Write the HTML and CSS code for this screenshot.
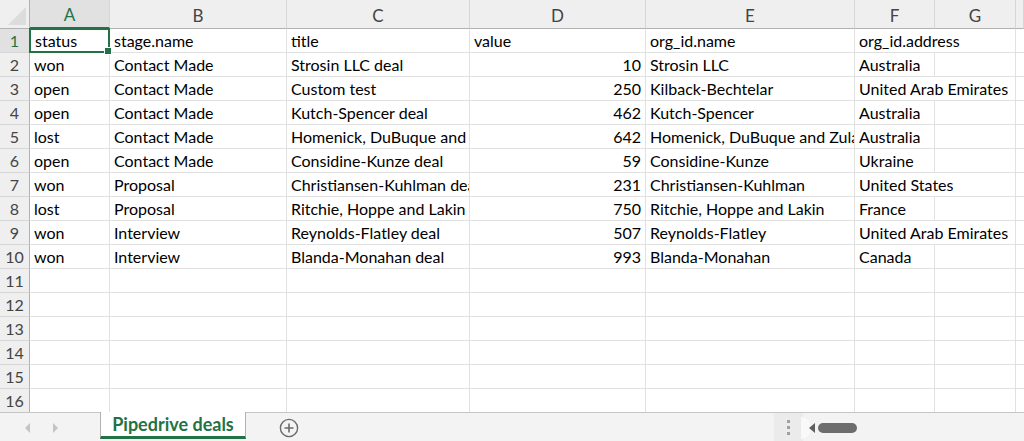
FILE: index.html
```html
<!DOCTYPE html>
<html lang="en">
<head>
  <meta charset="UTF-8">
  <meta name="viewport" content="width=device-width, initial-scale=1.0">
  <title>Pipedrive deals</title>
  <link rel="stylesheet" href="styles.css">
</head>
<body>
  <div class="sheet">
    <div class="row head">
      <div class="corner"><span class="tri"></span></div>
      <div class="col sel">A</div>
      <div class="col">B</div>
      <div class="col">C</div>
      <div class="col">D</div>
      <div class="col">E</div>
      <div class="col">F</div>
      <div class="col">G</div>
      <div class="col"></div>
    </div>

    <div class="row">
      <div class="num sel">1</div>
      <div class="cell active">status<span class="handle"></span></div>
      <div class="cell">stage.name</div>
      <div class="cell">title</div>
      <div class="cell">value</div>
      <div class="cell">org_id.name</div>
      <div class="cell spill">org_id.address</div>
      <div class="cell"></div>
    </div>
    <div class="row">
      <div class="num">2</div>
      <div class="cell">won</div>
      <div class="cell">Contact Made</div>
      <div class="cell">Strosin LLC deal</div>
      <div class="cell n">10</div>
      <div class="cell">Strosin LLC</div>
      <div class="cell">Australia</div>
      <div class="cell"></div>
      <div class="cell"></div>
    </div>
    <div class="row">
      <div class="num">3</div>
      <div class="cell">open</div>
      <div class="cell">Contact Made</div>
      <div class="cell">Custom test</div>
      <div class="cell n">250</div>
      <div class="cell">Kilback-Bechtelar</div>
      <div class="cell spill">United Arab Emirates</div>
      <div class="cell"></div>
    </div>
    <div class="row">
      <div class="num">4</div>
      <div class="cell">open</div>
      <div class="cell">Contact Made</div>
      <div class="cell">Kutch-Spencer deal</div>
      <div class="cell n">462</div>
      <div class="cell">Kutch-Spencer</div>
      <div class="cell">Australia</div>
      <div class="cell"></div>
      <div class="cell"></div>
    </div>
    <div class="row">
      <div class="num">5</div>
      <div class="cell">lost</div>
      <div class="cell">Contact Made</div>
      <div class="cell">Homenick, DuBuque and Zulauf deal</div>
      <div class="cell n">642</div>
      <div class="cell">Homenick, DuBuque and Zulauf</div>
      <div class="cell">Australia</div>
      <div class="cell"></div>
      <div class="cell"></div>
    </div>
    <div class="row">
      <div class="num">6</div>
      <div class="cell">open</div>
      <div class="cell">Contact Made</div>
      <div class="cell">Considine-Kunze deal</div>
      <div class="cell n">59</div>
      <div class="cell">Considine-Kunze</div>
      <div class="cell">Ukraine</div>
      <div class="cell"></div>
      <div class="cell"></div>
    </div>
    <div class="row">
      <div class="num">7</div>
      <div class="cell">won</div>
      <div class="cell">Proposal</div>
      <div class="cell">Christiansen-Kuhlman deal</div>
      <div class="cell n">231</div>
      <div class="cell">Christiansen-Kuhlman</div>
      <div class="cell spill">United States</div>
      <div class="cell"></div>
    </div>
    <div class="row">
      <div class="num">8</div>
      <div class="cell">lost</div>
      <div class="cell">Proposal</div>
      <div class="cell">Ritchie, Hoppe and Lakin deal</div>
      <div class="cell n">750</div>
      <div class="cell">Ritchie, Hoppe and Lakin</div>
      <div class="cell">France</div>
      <div class="cell"></div>
      <div class="cell"></div>
    </div>
    <div class="row">
      <div class="num">9</div>
      <div class="cell">won</div>
      <div class="cell">Interview</div>
      <div class="cell">Reynolds-Flatley deal</div>
      <div class="cell n">507</div>
      <div class="cell">Reynolds-Flatley</div>
      <div class="cell spill">United Arab Emirates</div>
      <div class="cell"></div>
    </div>
    <div class="row">
      <div class="num">10</div>
      <div class="cell">won</div>
      <div class="cell">Interview</div>
      <div class="cell">Blanda-Monahan deal</div>
      <div class="cell n">993</div>
      <div class="cell">Blanda-Monahan</div>
      <div class="cell">Canada</div>
      <div class="cell"></div>
      <div class="cell"></div>
    </div>

    <div id="emptyRows"></div>
  </div>

  <div class="tabbar">
    <div class="nav">
      <span class="arrow left"></span>
      <span class="arrow right"></span>
    </div>
    <div class="tab">Pipedrive deals</div>
    <div class="add">
      <svg width="20" height="20" viewBox="0 0 20 20">
        <circle cx="10" cy="10" r="8.6" fill="none" stroke="#6b6b6b" stroke-width="1.4"/>
        <path d="M10 5.5v9M5.5 10h9" stroke="#6b6b6b" stroke-width="1.6"/>
      </svg>
    </div>
    <div class="spacer"></div>
    <div class="grip"><span></span><span></span><span></span></div>
    <div class="hscroll">
      <span class="cap"></span>
      <span class="tri-left"></span>
      <span class="thumb"></span>
    </div>
  </div>

  <script>
    // rows 11..16 are blank
    const emptyRows = document.getElementById('emptyRows');
    for (let r = 11; r <= 16; r++) {
      const row = document.createElement('div');
      row.className = 'row';
      row.innerHTML = `<div class="num">${r}</div>` + '<div class="cell"></div>'.repeat(8);
      emptyRows.appendChild(row);
    }
  </script>
</body>
</html>
```

FILE: styles.css
```css
body {
  font-family: Lato, "Open Sans", sans-serif;
  background-color: #ffffff;
  margin: 0;
  padding: 0;
  width: 1024px;
  height: 441px;
  overflow: hidden;
  color: #000;
}
.sheet {
  height: 412px;
  overflow: hidden;
}
.row {
  display: grid;
  grid-template-columns: 30px 80px 177px 183px 176px 209px 80px 81px 1fr;
  height: 24px;
}
.row.head {
  height: 29px;
}
.col, .corner, .num {
  background-color: #efefef;
  color: #444;
  box-sizing: border-box;
  display: flex;
  align-items: center;
  justify-content: center;
}
.col {
  font-size: 17px;
  padding-top: 2px;
  border-right: 1px solid #d6d6d6;
  border-bottom: 1px solid #b2b2b2;
}
.corner {
  border-right: 1px solid #b2b2b2;
  border-bottom: 1px solid #b2b2b2;
  position: relative;
}
.corner .tri {
  position: absolute;
  right: 3px;
  bottom: 3px;
  width: 0;
  height: 0;
  border-left: 18px solid transparent;
  border-bottom: 18px solid #dcdcdc;
}
.num {
  font-size: 16px;
  border-right: 1px solid #b2b2b2;
  border-bottom: 1px solid #d6d6d6;
}
.col.sel {
  background-color: #e1e1e1;
  color: #217346;
  border-bottom: 2px solid #217346;
}
.num.sel {
  background-color: #e1e1e1;
  color: #217346;
}
.cell {
  box-sizing: border-box;
  border-right: 1px solid #e1e1e1;
  border-bottom: 1px solid #e1e1e1;
  font-size: 16px;
  line-height: 24px;
  padding: 0 4px;
  white-space: nowrap;
  overflow: hidden;
}
.cell.n {
  text-align: right;
}
.cell.spill {
  grid-column: span 2;
}
.cell.active {
  position: relative;
  overflow: visible;
  border: 2px solid #217346;
  margin: -1px 0 0 -1px;
  padding-left: 4px;
  line-height: 22px;
  height: 25px;
  width: 81px;
}
.handle {
  position: absolute;
  right: -4px;
  bottom: -4px;
  width: 6px;
  height: 6px;
  background-color: #217346;
  border: 1px solid #fff;
}
.tabbar {
  height: 29px;
  background-color: #f3f3f3;
  border-top: 1px solid #c6c6c6;
  display: flex;
  align-items: stretch;
}
.nav {
  width: 100px;
  box-sizing: border-box;
  display: flex;
  align-items: center;
  gap: 23px;
  padding-left: 25px;
}
.arrow {
  width: 0;
  height: 0;
  border-top: 5px solid transparent;
  border-bottom: 5px solid transparent;
}
.arrow.left {
  border-right: 5px solid #c4c4c4;
}
.arrow.right {
  border-left: 5px solid #c4c4c4;
}
.tab {
  width: 146px;
  box-sizing: border-box;
  margin-top: -1px;
  background-color: #ffffff;
  border-left: 1px solid #b2b2b2;
  border-right: 1px solid #b2b2b2;
  border-bottom: 3px solid #217346;
  height: 27px;
  color: #217346;
  font-weight: bold;
  font-size: 18px;
  display: flex;
  align-items: center;
  justify-content: center;
}
.add {
  width: 86px;
  display: flex;
  align-items: center;
  justify-content: center;
}
.spacer {
  flex: 1;
}
.grip {
  width: 29px;
  background-color: #ebebeb;
  display: flex;
  flex-direction: column;
  align-items: center;
  justify-content: center;
  gap: 3px;
}
.grip span {
  width: 3px;
  height: 3px;
  background-color: #a0a0a0;
}
.hscroll {
  width: 221px;
  display: flex;
  align-items: center;
  position: relative;
}
.hscroll .cap {
  width: 10px;
  height: 22px;
  background-color: #f9f9f9;
  border-radius: 0 11px 11px 0;
  margin-left: -2px;
}
.tri-left {
  width: 0;
  height: 0;
  border-top: 5px solid transparent;
  border-bottom: 5px solid transparent;
  border-right: 6px solid #606060;
  margin-left: -2px;
}
.thumb {
  width: 39px;
  height: 10px;
  border-radius: 5px;
  background-color: #6d6d6d;
  margin-left: 3px;
}
```
